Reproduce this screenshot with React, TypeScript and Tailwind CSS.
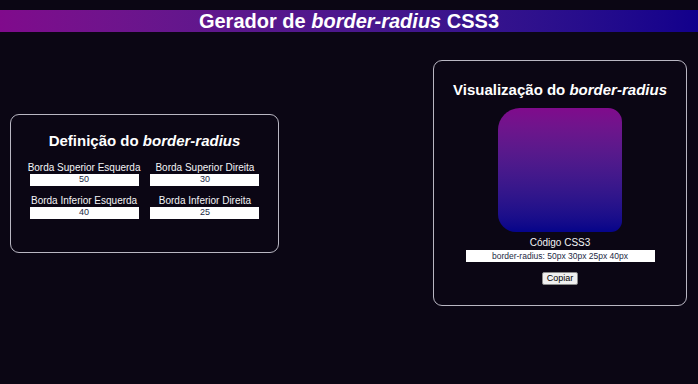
const font = { fontFamily: '"Liberation Sans", Arial, sans-serif' };

function Field({ label, value }: { label: string; value: string }) {
  return (
    <div className="flex flex-col items-center">
      <span className="text-[10px] leading-[12px] whitespace-nowrap text-gray-100">{label}</span>
      <div className="w-[109px] h-[12px] bg-white flex items-center justify-center text-[9px] text-[#1c2a44]">
        {value}
      </div>
    </div>
  );
}

export default function App() {
  return (
    <div className="w-[698px] h-[384px] bg-[#0b0614] text-white pt-[10px] overflow-hidden" style={font}>
      <header className="h-[22px] flex items-center justify-center bg-gradient-to-r from-[#800a8c] to-[#12008c]">
        <h1 className="text-[20px] font-bold leading-none">
          Gerador de <em>border-radius</em> CSS3
        </h1>
      </header>

      <main className="h-[302px] flex items-center justify-between pl-[10px] pr-[11px]">
        <section className="w-[269px] border border-[#b9b6c2] rounded-[9px] pt-[17px] pb-[33px] flex flex-col items-center">
          <h2 className="text-[15px] font-bold leading-[18px]">
            Definição do <em>border-radius</em>
          </h2>
          <div className="mt-[12px] grid grid-cols-2 gap-x-[8px] gap-y-[9px]">
            <Field label="Borda Superior Esquerda" value="50" />
            <Field label="Borda Superior Direita" value="30" />
            <Field label="Borda Inferior Esquerda" value="40" />
            <Field label="Borda Inferior Direita" value="25" />
          </div>
        </section>

        <section className="w-[254px] border border-[#b9b6c2] rounded-[9px] pt-[20px] pb-[20px] flex flex-col items-center">
          <h2 className="text-[15px] font-bold leading-[18px]">
            Visualização do <em>border-radius</em>
          </h2>
          <div className="mt-[9px] w-[124px] h-[124px] bg-gradient-to-b from-[#800a8c] to-[#05048a] rounded-[22px_14px_11px_18px]" />
          <span className="mt-[5px] text-[10px] leading-[12px] text-gray-100">Código CSS3</span>
          <div className="mt-[1px] w-[189px] h-[12px] bg-white flex items-center justify-center text-[8.5px] text-[#1c2a44]">
            border-radius: 50px 30px 25px 40px
          </div>
          <button className="mt-[10px] h-[13px] px-[4px] bg-[#efefef] border border-[#8a8a8a] rounded-[2px] text-[9px] leading-none text-black">
            Copiar
          </button>
        </section>
      </main>
    </div>
  );
}
